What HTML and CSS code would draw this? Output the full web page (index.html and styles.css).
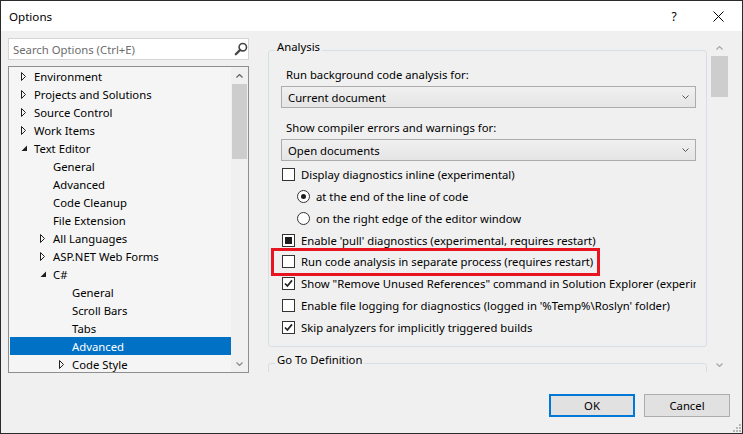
FILE: index.html
```html
<!DOCTYPE html>
<html>
<head>
<meta charset="utf-8">
<title>Options</title>
<link rel="stylesheet" href="styles.css">
</head>
<body>
<div class="window">
  <div class="titlebar">
    <span class="title">Options</span>
    <span class="cap help">?</span>
    <span class="cap close"><svg width="11" height="11" viewBox="0 0 11 11"><path d="M0.5 0.5 L10.5 10.5 M10.5 0.5 L0.5 10.5" stroke="#000" stroke-width="1" fill="none"/></svg></span>
  </div>
  <div class="body">
    <div class="main">
      <div class="left">
        <div class="search">
          <span class="ph">Search Options (Ctrl+E)</span>
          <svg class="mag" width="14" height="14" viewBox="0 0 14 14"><circle cx="8.8" cy="5.2" r="3.7" stroke="#464646" stroke-width="1.6" fill="none"/><path d="M6.2 7.9 L1.8 12.3" stroke="#464646" stroke-width="2.3" stroke-linecap="round"/></svg>
        </div>
        <div class="tree">
          <div class="rows">
            <div class="node l0"><span class="exp"><svg width="6" height="9" viewBox="0 0 6 9"><path d="M0.5 0.5 L4.5 4.5 L0.5 8.5 Z" fill="none" stroke="#1e1e1e"/></svg></span>Environment</div>
            <div class="node l0"><span class="exp"><svg width="6" height="9" viewBox="0 0 6 9"><path d="M0.5 0.5 L4.5 4.5 L0.5 8.5 Z" fill="none" stroke="#1e1e1e"/></svg></span>Projects and Solutions</div>
            <div class="node l0"><span class="exp"><svg width="6" height="9" viewBox="0 0 6 9"><path d="M0.5 0.5 L4.5 4.5 L0.5 8.5 Z" fill="none" stroke="#1e1e1e"/></svg></span>Source Control</div>
            <div class="node l0"><span class="exp"><svg width="6" height="9" viewBox="0 0 6 9"><path d="M0.5 0.5 L4.5 4.5 L0.5 8.5 Z" fill="none" stroke="#1e1e1e"/></svg></span>Work Items</div>
            <div class="node l0"><span class="exp"><svg width="7" height="7" viewBox="0 0 7 7"><path d="M6 0.5 L6 6 L0.5 6 Z" fill="#1e1e1e"/></svg></span>Text Editor</div>
            <div class="node l1"><span class="exp"></span>General</div>
            <div class="node l1"><span class="exp"></span>Advanced</div>
            <div class="node l1"><span class="exp"></span>Code Cleanup</div>
            <div class="node l1"><span class="exp"></span>File Extension</div>
            <div class="node l1"><span class="exp"><svg width="6" height="9" viewBox="0 0 6 9"><path d="M0.5 0.5 L4.5 4.5 L0.5 8.5 Z" fill="none" stroke="#1e1e1e"/></svg></span>All Languages</div>
            <div class="node l1"><span class="exp"><svg width="6" height="9" viewBox="0 0 6 9"><path d="M0.5 0.5 L4.5 4.5 L0.5 8.5 Z" fill="none" stroke="#1e1e1e"/></svg></span>ASP.NET Web Forms</div>
            <div class="node l1"><span class="exp"><svg width="7" height="7" viewBox="0 0 7 7"><path d="M6 0.5 L6 6 L0.5 6 Z" fill="#1e1e1e"/></svg></span>C#</div>
            <div class="node l2"><span class="exp"></span>General</div>
            <div class="node l2"><span class="exp"></span>Scroll Bars</div>
            <div class="node l2"><span class="exp"></span>Tabs</div>
            <div class="node l2 sel"><span class="exp"></span>Advanced</div>
            <div class="node l2"><span class="exp"><svg width="6" height="9" viewBox="0 0 6 9"><path d="M0.5 0.5 L4.5 4.5 L0.5 8.5 Z" fill="none" stroke="#1e1e1e"/></svg></span>Code Style</div>
          </div>
          <div class="vscroll tree-scroll">
            <span class="arr"><svg width="7" height="4" viewBox="0 0 7 4"><polyline points="0.5,3.5 3.5,0.5 6.5,3.5" fill="none" stroke="#606060" stroke-width="1.2"/></svg></span>
            <span class="thumb tthumb"></span>
            <span class="fill"></span>
            <span class="arr"><svg width="7" height="4" viewBox="0 0 7 4"><polyline points="0.5,0.5 3.5,3.5 6.5,0.5" fill="none" stroke="#8a8a8a" stroke-width="1.2"/></svg></span>
          </div>
        </div>
      </div>
      <div class="right">
        <div class="pane">
          <div class="group">
            <div class="gtitle">Analysis</div>
            <div class="label">Run background code analysis for:</div>
            <div class="combo"><span>Current document</span><svg width="7" height="4" viewBox="0 0 7 4"><polyline points="0.5,0.5 3.5,3.5 6.5,0.5" fill="none" stroke="#555" stroke-width="1"/></svg></div>
            <div class="label">Show compiler errors and warnings for:</div>
            <div class="combo"><span>Open documents</span><svg width="7" height="4" viewBox="0 0 7 4"><polyline points="0.5,0.5 3.5,3.5 6.5,0.5" fill="none" stroke="#555" stroke-width="1"/></svg></div>
            <div class="opts">
              <div class="row"><span class="box"></span>Display diagnostics inline (experimental)</div>
              <div class="row sub"><span class="radio on"><span class="dot"></span></span>at the end of the line of code</div>
              <div class="row sub"><span class="radio"></span>on the right edge of the editor window</div>
              <div class="row"><span class="box ind"><span class="sq"></span></span>Enable 'pull' diagnostics (experimental, requires restart)</div>
              <div class="redbox"><div class="row"><span class="box"></span>Run code analysis in separate process (requires restart)</div></div>
              <div class="row"><span class="box"><svg width="11" height="11" viewBox="0 0 11 11"><path d="M2 5.5 L4.4 8 L9 2.4" fill="none" stroke="#222" stroke-width="1.7"/></svg></span>Show "Remove Unused References" command in Solution Explorer (experimental)</div>
              <div class="row"><span class="box"></span>Enable file logging for diagnostics (logged in '%Temp%\Roslyn' folder)</div>
              <div class="row"><span class="box"><svg width="11" height="11" viewBox="0 0 11 11"><path d="M2 5.5 L4.4 8 L9 2.4" fill="none" stroke="#222" stroke-width="1.7"/></svg></span>Skip analyzers for implicitly triggered builds</div>
            </div>
          </div>
          <div class="group g2">
            <div class="gtitle">Go To Definition</div>
          </div>
        </div>
        <div class="vscroll pane-scroll">
          <span class="arr"><svg width="7" height="4" viewBox="0 0 7 4"><polyline points="0.5,3.5 3.5,0.5 6.5,3.5" fill="none" stroke="#a6a6a6" stroke-width="1.2"/></svg></span>
          <span class="thumb pthumb"></span>
          <span class="fill"></span>
          <span class="arr"><svg width="7" height="4" viewBox="0 0 7 4"><polyline points="0.5,0.5 3.5,3.5 6.5,0.5" fill="none" stroke="#a6a6a6" stroke-width="1.2"/></svg></span>
        </div>
      </div>
    </div>
    <div class="footer">
      <button class="btn ok">OK</button>
      <button class="btn">Cancel</button>
    </div>
    <svg class="grip" width="9" height="9" viewBox="0 0 9 9"><rect x="7" y="1" width="2" height="2" fill="#b8b8b8"/><rect x="4" y="4" width="2" height="2" fill="#b8b8b8"/><rect x="7" y="4" width="2" height="2" fill="#b8b8b8"/><rect x="1" y="7" width="2" height="2" fill="#b8b8b8"/><rect x="4" y="7" width="2" height="2" fill="#b8b8b8"/><rect x="7" y="7" width="2" height="2" fill="#b8b8b8"/></svg>
  </div>
</div>
</body>
</html>
```
FILE: styles.css
```css
body {
  margin: 0;
  background: #262626;
  font-family: "Noto Sans", "DejaVu Sans", sans-serif;
  font-size: 11.3px;
  color: #000;
}

.window {
  width: 743px;
  height: 434px;
  box-sizing: border-box;
  border: 1px solid #2b2b2b;
  display: flex;
  flex-direction: column;
  background: #f0f0f0;
}

.titlebar {
  height: 30px;
  flex: none;
  background: #fff;
  display: flex;
  align-items: center;
}

.title {
  flex: 1;
  padding-left: 8px;
  font-size: 11.6px;
}

.cap {
  width: 46px;
  height: 30px;
  display: flex;
  align-items: center;
  justify-content: center;
}

.help {
  font-size: 12px;
  padding-left: 2px;
  box-sizing: border-box;
}

.close {
  padding-right: 2px;
  box-sizing: border-box;
}

.body {
  flex: 1;
  display: flex;
  flex-direction: column;
  padding: 7px 14px 0 7px;
  position: relative;
}

.main {
  display: flex;
  height: 335px;
}

.left {
  width: 241px;
  display: flex;
  flex-direction: column;
  gap: 6px;
}

.search {
  height: 22px;
  box-sizing: border-box;
  border: 1px solid #d4d4d4;
  background: #fff;
  display: flex;
  align-items: center;
  justify-content: space-between;
  padding: 0 0 0 4px;
}

.ph {
  color: #6d6d6d;
}

.tree {
  height: 307px;
  box-sizing: border-box;
  border: 1px solid #8e8e8e;
  background: #f5f5f5;
  display: flex;
}

.rows {
  flex: 1;
  padding-left: 1px;
  overflow: hidden;
}

.node {
  height: 18px;
  display: flex;
  align-items: center;
  white-space: nowrap;
}

.node.l0 { padding-left: 11px; }
.node.l1 { padding-left: 30px; }
.node.l2 { padding-left: 49px; }

.node.sel {
  background: #0071c5;
  color: #fff;
}

.exp {
  width: 13px;
  flex: none;
  display: flex;
  align-items: center;
}

.vscroll {
  width: 17px;
  flex: none;
  display: flex;
  flex-direction: column;
  background: #f0f0f0;
}

.arr {
  height: 17px;
  flex: none;
  display: flex;
  align-items: center;
  justify-content: center;
}

.thumb {
  background: #cdcdcd;
  flex: none;
}

.tthumb {
  height: 75px;
  margin: 0 1px;
}

.pthumb {
  height: 41px;
}

.fill {
  flex: 1;
}

.right {
  margin-left: 19px;
  display: flex;
  gap: 4px;
}

.pane {
  width: 439px;
  height: 334px;
  box-sizing: border-box;
  padding-top: 1px;
  overflow: hidden;
}

.pane-scroll {
  margin-top: 1px;
  height: 334px;
}

.group {
  border: 1px solid #d5dfe5;
  border-radius: 3px;
  margin-top: 11px;
  padding: 0 10px 8px 12px;
}

.group.g2 {
  margin-top: 16px;
  height: 60px;
}

.gtitle {
  margin: -12px 0 0 -6px;
  padding: 0 2px;
  background: #f0f0f0;
  width: max-content;
  height: 16px;
  line-height: 16px;
}

.label {
  margin: 12px 0 0 5px;
  line-height: 16px;
  height: 16px;
}

.combo {
  margin-top: 3px;
  height: 22px;
  box-sizing: border-box;
  border: 1px solid #acacac;
  background: linear-gradient(#f0f0f0, #e5e5e5);
  display: flex;
  align-items: center;
  justify-content: space-between;
  padding: 0 6px 0 6px;
}

.opts {
  margin-top: 3px;
}

.row {
  height: 21.75px;
  display: flex;
  align-items: center;
  white-space: nowrap;
  overflow: hidden;
  padding-left: 1px;
}

.row.sub {
  padding-left: 16px;
}

.box {
  width: 13px;
  height: 13px;
  box-sizing: border-box;
  border: 1px solid #333;
  background: #fff;
  margin-right: 6px;
  flex: none;
  display: flex;
  align-items: center;
  justify-content: center;
}

.sq {
  width: 7px;
  height: 7px;
  background: #1e1e1e;
}

.radio {
  width: 13px;
  height: 13px;
  box-sizing: border-box;
  border: 1px solid #333;
  border-radius: 50%;
  background: #fff;
  margin-right: 6px;
  flex: none;
  display: flex;
  align-items: center;
  justify-content: center;
}

.dot {
  width: 5px;
  height: 5px;
  border-radius: 50%;
  background: #1e1e1e;
}

.redbox {
  border: 3px solid #e8141f;
  margin: -3px 0 -3px -10px;
  width: 329px;
  box-sizing: border-box;
  padding-left: 7px;
}

.footer {
  margin-top: 21px;
  margin-right: -2px;
  display: flex;
  justify-content: flex-end;
  gap: 9px;
}

.btn {
  width: 86px;
  height: 23px;
  box-sizing: border-box;
  border: 1px solid #adadad;
  background: #e1e1e1;
  font: inherit;
  color: #000;
  padding: 0;
}

.btn.ok {
  border: 2px solid #0078d7;
}

.grip {
  position: absolute;
  right: 1px;
  bottom: 1px;
}
```
